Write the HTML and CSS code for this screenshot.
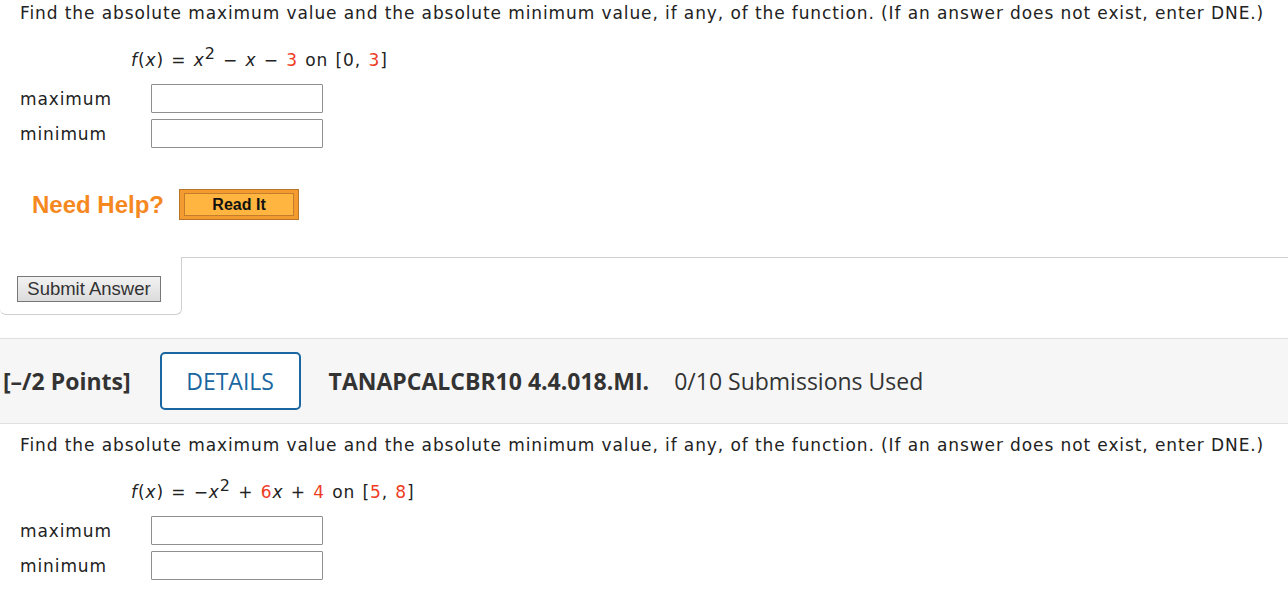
FILE: index.html
```html
<!DOCTYPE html>
<html>
<head>
<meta charset="utf-8">
<link rel="stylesheet" href="styles.css">
</head>
<body>
<div class="question first">
  <p class="prompt">Find the absolute maximum value and the absolute minimum value, if any, of the function. (If an answer does not exist, enter DNE.)</p>
  <p class="formula"><i>f</i>(<i>x</i>) = <i>x</i><sup>2</sup> − <i>x</i> − <span class="red">3</span> on [0, <span class="red">3</span>]</p>
  <div class="answers">
    <div class="row"><span class="label">maximum</span><input class="box" type="text"></div>
    <div class="row"><span class="label">minimum</span><input class="box" type="text"></div>
  </div>
  <div class="help">
    <span class="need">Need Help?</span>
    <span class="readit"><span class="readit-inner">Read It</span></span>
  </div>
</div>
<div class="submit-bar">
  <div class="submit-box"><button class="submit">Submit Answer</button></div>
  <div class="submit-rest"></div>
</div>
<div class="header">
  <span class="points">[–/2 Points]</span>
  <span class="details">DETAILS</span>
  <span class="code">TANAPCALCBR10 4.4.018.MI.</span>
  <span class="subs">0/10 Submissions Used</span>
</div>
<div class="question second">
  <p class="prompt">Find the absolute maximum value and the absolute minimum value, if any, of the function. (If an answer does not exist, enter DNE.)</p>
  <p class="formula"><i>f</i>(<i>x</i>) = −<i>x</i><sup>2</sup> + <span class="red">6</span><i>x</i> + <span class="red">4</span> on [<span class="red">5</span>, <span class="red">8</span>]</p>
  <div class="answers">
    <div class="row"><span class="label">maximum</span><input class="box" type="text"></div>
    <div class="row"><span class="label">minimum</span><input class="box" type="text"></div>
  </div>
</div>
</body>
</html>
```
FILE: styles.css
```css
html, body {
  margin: 0;
  padding: 0;
  background: #fff;
}
body {
  font-family: "DejaVu Sans", Verdana, sans-serif;
  font-size: 17px;
  letter-spacing: 0.9px;
  line-height: 20px;
  color: #222;
  width: 1288px;
  overflow: hidden;
}
.question {
  padding-left: 20px;
}
.question.first {
  padding-top: 3px;
}
.question.second {
  padding-top: 11px;
}
.prompt {
  margin: 0;
  white-space: nowrap;
}
.formula {
  margin: 27px 0 0 111px;
  word-spacing: 1px;
}
.formula i {
  font-style: oblique;
}
.formula sup {
  font-size: 16px;
  line-height: 0;
  vertical-align: 7px;
}
.red {
  color: #ee3c1f;
}
.answers {
  margin-top: 14px;
  display: flex;
  flex-direction: column;
  gap: 6px;
}
.row {
  display: flex;
  align-items: center;
  height: 29px;
}
.label {
  width: 131px;
}
.box {
  box-sizing: border-box;
  width: 172px;
  height: 29px;
  margin: 0;
  border: 1px solid #8f8f8f;
  border-radius: 1px;
  background: #fff;
  padding: 0 4px;
}
.help {
  margin-top: 41px;
  display: flex;
  align-items: center;
  padding-left: 12px;
  gap: 15px;
  height: 31px;
  letter-spacing: 0;
}
.need {
  font-family: "Liberation Sans", Arial, sans-serif;
  font-weight: bold;
  font-size: 24px;
  color: #f5891f;
  line-height: 31px;
}
.readit {
  box-sizing: border-box;
  width: 120px;
  height: 31px;
  border: 1px solid #b8752c;
  background: #f39b2e;
  padding: 3px 4px;
  display: flex;
}
.readit-inner {
  flex: 1;
  border: 1px solid #c47d2c;
  background: #ffb53f;
  font-family: "Liberation Sans", Arial, sans-serif;
  font-weight: bold;
  font-size: 16px;
  color: #111;
  display: flex;
  align-items: center;
  justify-content: center;
  line-height: 1;
}
.submit-bar {
  margin-top: 37px;
  display: flex;
  align-items: flex-start;
  letter-spacing: 0;
}
.submit-box {
  width: 164px;
  height: 38px;
  padding: 19px 0 0 17px;
  border-right: 1px solid #cfcfcf;
  border-bottom: 1px solid #cfcfcf;
  border-radius: 0 0 6px 6px;
}
.submit-rest {
  flex: 1;
  border-top: 1px solid #cfcfcf;
}
.submit {
  box-sizing: border-box;
  width: 144px;
  height: 26px;
  margin: 0;
  padding: 0;
  border: 1px solid #777;
  border-radius: 0;
  background: linear-gradient(#f2f2f2, #dcdcdc);
  font-family: "Liberation Sans", Arial, sans-serif;
  font-size: 18.5px;
  color: #333;
  line-height: 24px;
}
.header {
  margin-top: 23px;
  box-sizing: border-box;
  height: 86px;
  border-top: 1px solid #e0e0e0;
  border-bottom: 1px solid #e0e0e0;
  background: #f6f6f6;
  display: flex;
  align-items: center;
  padding-left: 3px;
  font-family: "Open Sans", sans-serif;
  font-size: 23px;
  letter-spacing: 0;
  color: #333;
}
.points {
  font-weight: bold;
}
.details {
  box-sizing: border-box;
  margin-left: 29px;
  width: 141px;
  height: 58px;
  border: 2px solid #1a66a0;
  border-radius: 5px;
  color: #1a66a0;
  display: flex;
  align-items: center;
  justify-content: center;
  background: #fff;
}
.code {
  margin-left: 28px;
  font-weight: bold;
}
.subs {
  margin-left: 25px;
}
```
